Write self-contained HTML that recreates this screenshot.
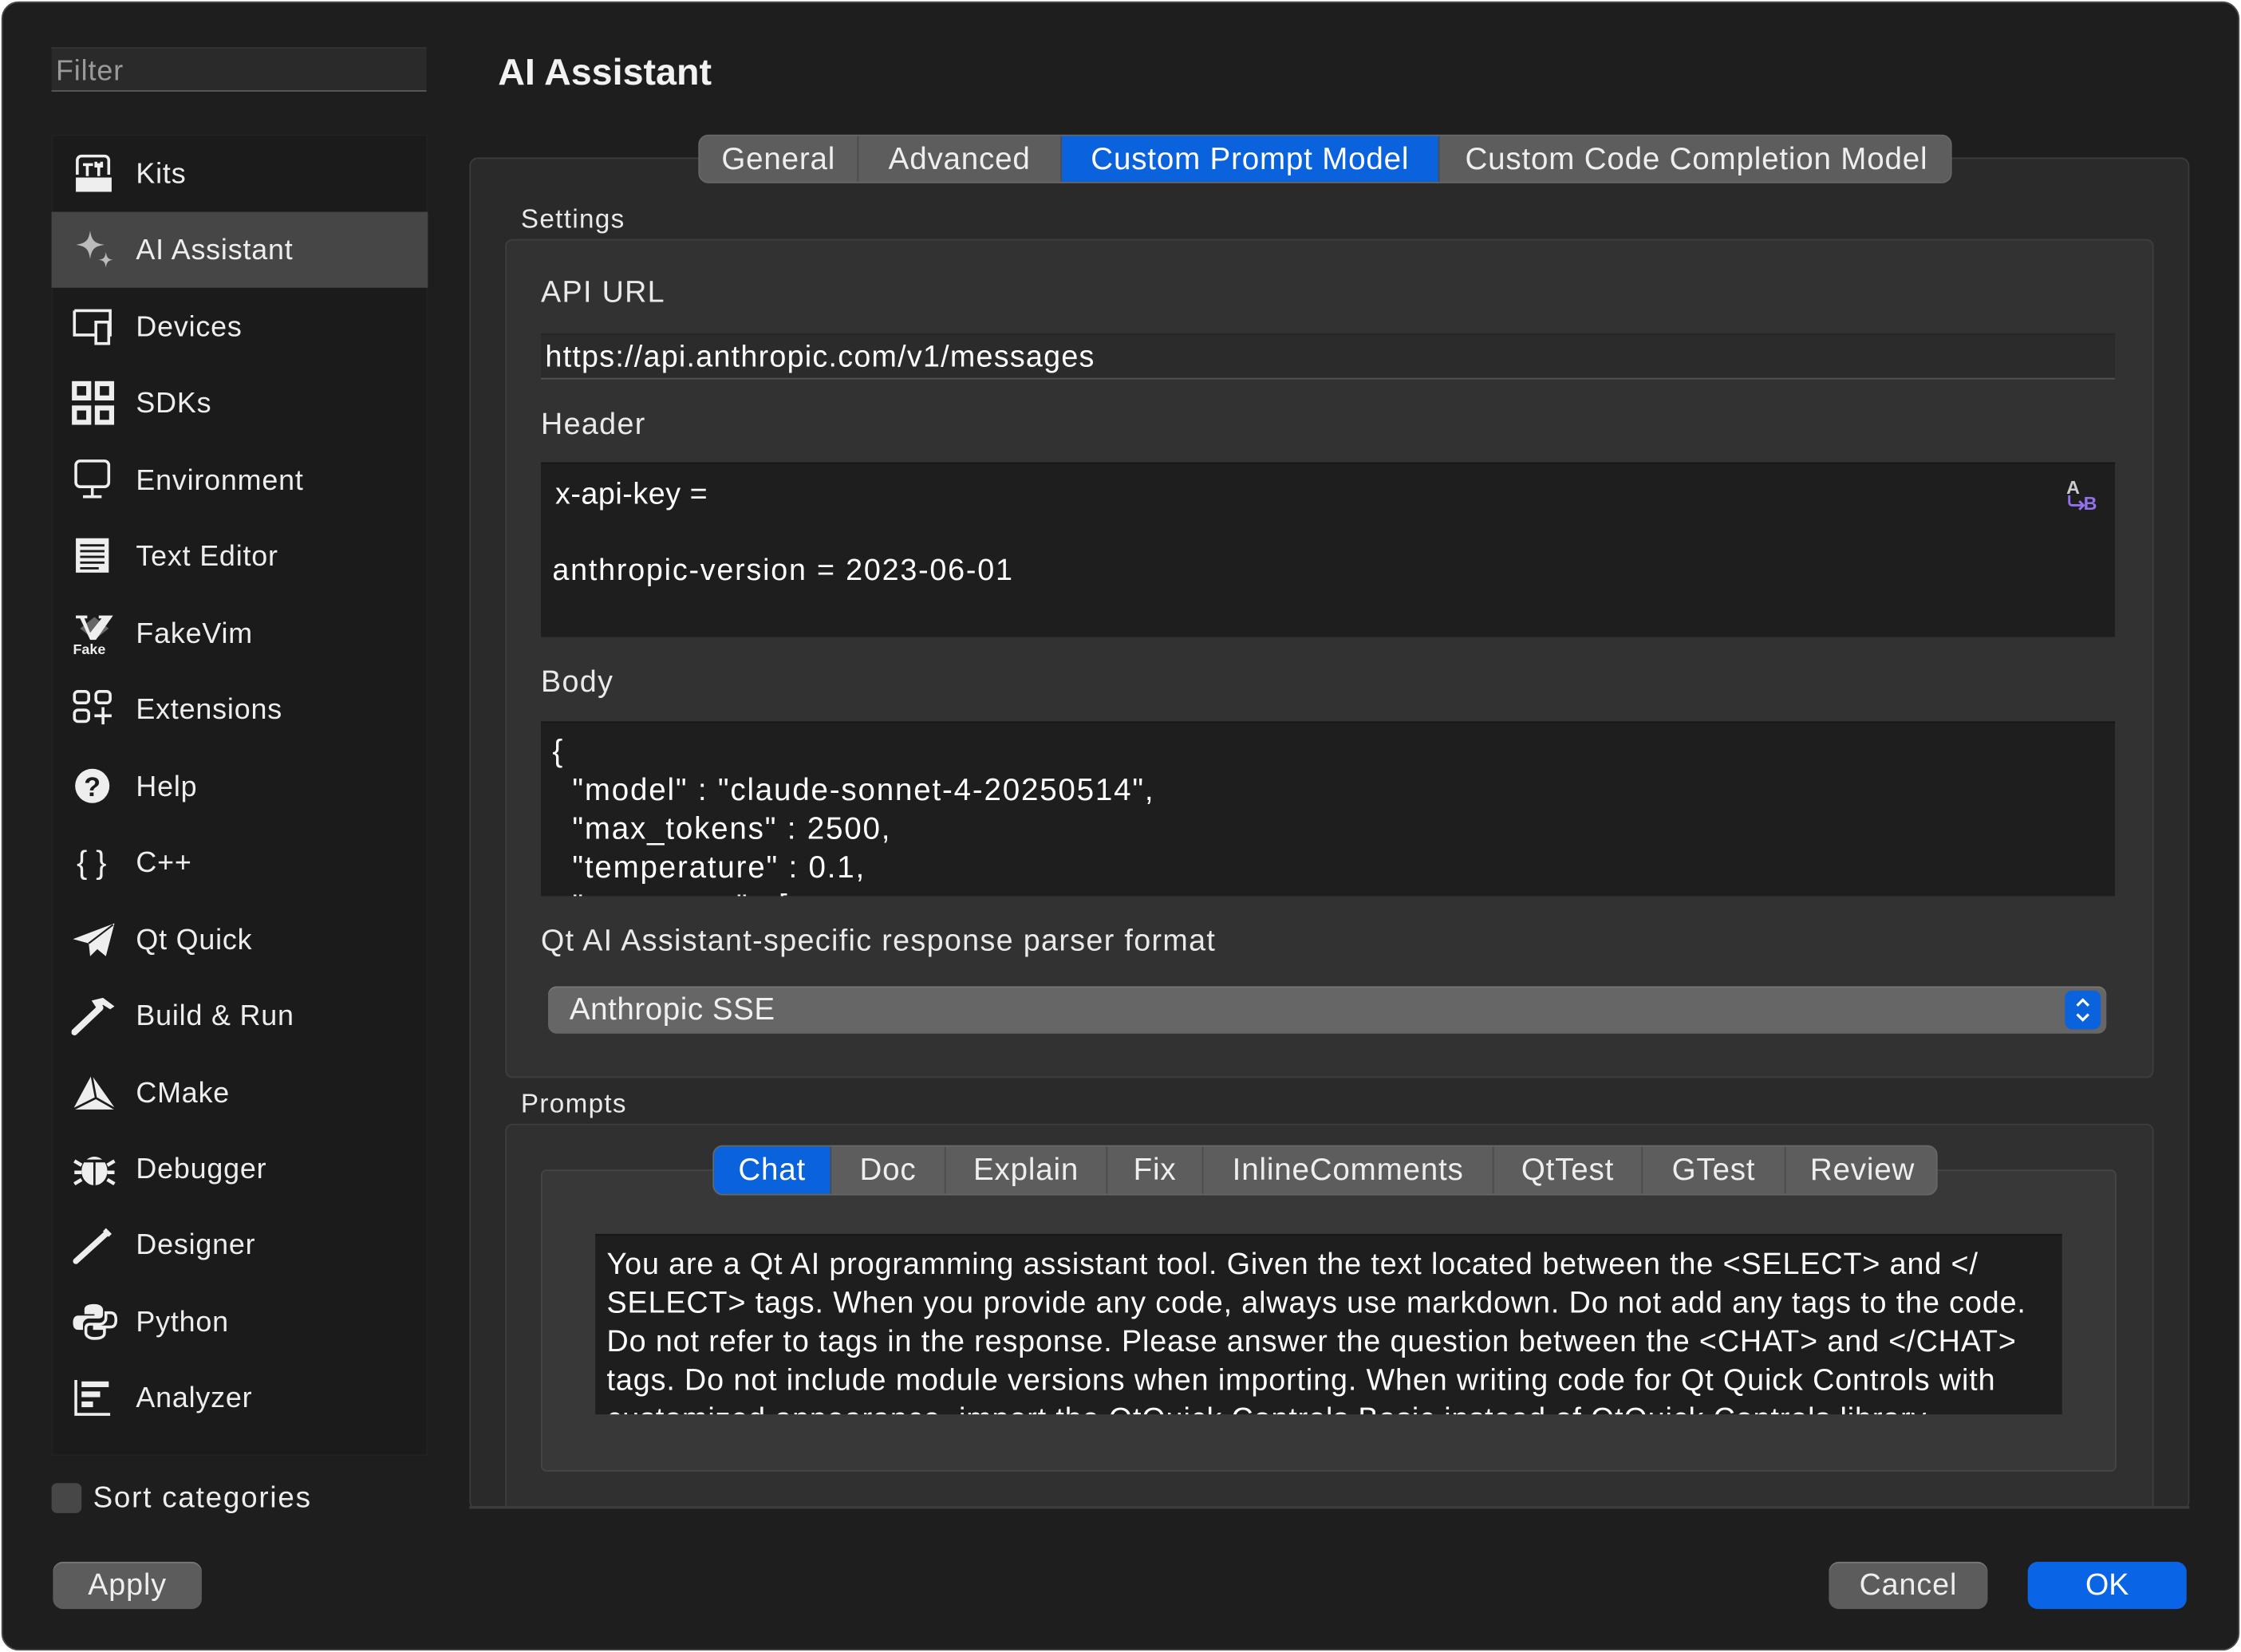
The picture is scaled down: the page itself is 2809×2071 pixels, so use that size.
<!DOCTYPE html>
<html><head><meta charset="utf-8"><style>
*{box-sizing:border-box;margin:0;padding:0}
html,body{width:2809px;height:2071px;overflow:hidden;background:#fff}
#s{position:absolute;left:0;top:0;width:1566px;height:1154px;transform:scale(1.7937,1.7946);transform-origin:0 0;font-family:"Liberation Sans",sans-serif;color:#eaeaea}
.a{position:absolute}
.win{left:1px;top:1px;width:1564px;height:1152px;background:#1e1e1e;border:1px solid #4a4a4a;border-radius:12px;overflow:hidden}
.t{position:absolute;white-space:nowrap;line-height:1}
.item{position:absolute;left:36px;width:262px;height:53px}
.item .t{left:59px;top:17px;font-size:20px;color:#eee;letter-spacing:0.45px}
.item svg{position:absolute;left:14px;top:11px}
.tab{position:absolute;top:0;height:100%;display:flex;align-items:center;justify-content:center;font-size:21.5px;color:#eee;border-right:1px solid #4c4c4c;letter-spacing:0.45px}
.ed{background:#1e1e1e;border-top:1px solid #151515}
.lb{letter-spacing:0.75px}
</style></head><body><div id="s">
<div class="a win"></div>
<div class="a" style="left:36px;top:33px;width:262px;height:31px;background:#2a2a2a;border-bottom:1px solid #5a5a5a;border-top:1px solid #333"></div>
<div class="t" style="left:39px;top:40px;font-size:20px;color:#9a9a9a;letter-spacing:0.5px">Filter</div>
<div class="t" style="left:348px;top:37px;font-size:26px;font-weight:bold;color:#f2f2f2">AI Assistant</div>
<div class="a" style="left:36px;top:94px;width:263px;height:923px;background:#1b1b1b;border:1px solid #222"></div>
<div class="a" style="left:36px;top:148px;width:263px;height:53px;background:#464646"></div>

<div class="item" style="top:95px"><svg width="30" height="30" viewBox="0 0 30 30"><path d="M4 16V6a3 3 0 0 1 3-3h16a3 3 0 0 1 3 3v10" stroke="#eee" stroke-width="2" fill="none"/><rect x="3" y="18" width="25" height="10" fill="#eee"/><path d="M8 9h7M11 9v8M19 8v9M17 7v3h4V7" stroke="#eee" stroke-width="2" fill="none"/></svg><div class="t">Kits</div></div>
<div class="item" style="top:148px"><svg width="34" height="34" viewBox="0 0 34 34"><path d="M13 2c1 7 3 9 10 10-7 1-9 3-10 10-1-7-3-9-10-10 7-1 9-3 10-10z" fill="#bbb"/><path d="M24 17c.6 4 1.5 5 5 5.5-3.5.5-4.4 1.5-5 5.5-.6-4-1.5-5-5-5.5 3.5-.5 4.4-1.5 5-5.5z" fill="#bbb"/></svg><div class="t">AI Assistant</div></div>
<div class="item" style="top:202px"><svg width="30" height="30" viewBox="0 0 30 30"><path d="M2 4h25v17h-5M17 21H2V4" stroke="#eee" stroke-width="2" fill="none"/><rect x="17" y="12" width="9" height="15" stroke="#eee" stroke-width="2" fill="#1b1b1b"/></svg><div class="t">Devices</div></div>
<div class="item" style="top:255px"><svg width="30" height="32" viewBox="0 0 30 32"><g stroke="#eee" stroke-width="3.5" fill="none"><rect x="2" y="2" width="10" height="10"/><rect x="18" y="2" width="10" height="10"/><rect x="2" y="19" width="10" height="10"/><rect x="18" y="19" width="10" height="10"/></g></svg><div class="t">SDKs</div></div>
<div class="item" style="top:309px"><svg width="30" height="30" viewBox="0 0 30 30"><rect x="3" y="2" width="23" height="18" rx="3" stroke="#eee" stroke-width="2" fill="none"/><path d="M14.5 20v7M8 27h13" stroke="#eee" stroke-width="2"/></svg><div class="t">Environment</div></div>
<div class="item" style="top:362px"><svg width="30" height="30" viewBox="0 0 30 30"><rect x="3" y="3" width="23" height="24" fill="#eee"/><path d="M6 8h17M6 12h17M6 16h17M6 20h17M6 24h13" stroke="#1b1b1b" stroke-width="1.6"/></svg><div class="t">Text Editor</div></div>
<div class="item" style="top:416px"><svg width="32" height="32" viewBox="0 0 32 32"><path d="M6 12l10 8 10-8-10-8z" fill="#666"/><path d="M3 3h8v2h-2l4 10 8-10h-2V3h10l-12 17h-4L6 5H3z" fill="#eee"/><text x="1" y="30" font-family="Liberation Sans" font-weight="bold" font-size="10" fill="#eee">Fake</text></svg><div class="t">FakeVim</div></div>
<div class="item" style="top:469px"><svg width="30" height="30" viewBox="0 0 30 30"><g stroke="#eee" stroke-width="2" fill="none"><rect x="2" y="3" width="10" height="8" rx="2.5"/><rect x="17" y="3" width="10" height="8" rx="2.5"/><rect x="2" y="16" width="10" height="8" rx="2.5"/><path d="M22 14v12M16 20h12"/></g></svg><div class="t">Extensions</div></div>
<div class="item" style="top:523px"><svg width="30" height="30" viewBox="0 0 30 30"><circle cx="14.5" cy="15" r="12" fill="#eee"/><text x="14.5" y="22" text-anchor="middle" font-family="Liberation Sans" font-weight="bold" font-size="19" fill="#1b1b1b">?</text></svg><div class="t">Help</div></div>
<div class="item" style="top:576px"><svg width="30" height="30" viewBox="0 0 30 30"><text x="14" y="23" text-anchor="middle" font-family="Liberation Sans" font-size="22" fill="#eee">{ }</text></svg><div class="t">C++</div></div>
<div class="item" style="top:630px"><svg width="32" height="30" viewBox="0 0 32 30"><path d="M1 15L30 4 24 27 18 22 13 27 12 18z" fill="#eee"/><path d="M12 18L29 5" stroke="#1b1b1b" stroke-width="1.2"/></svg><div class="t">Qt Quick</div></div>
<div class="item" style="top:683px"><svg width="32" height="30" viewBox="0 0 32 30"><path d="M2 27L20 10" stroke="#eee" stroke-width="4.5" stroke-linecap="round"/><path d="M14 5l8-2 8 6-3 2-5-3-4 3z" fill="#eee"/></svg><div class="t">Build &amp; Run</div></div>
<div class="item" style="top:737px"><svg width="32" height="30" viewBox="0 0 32 30"><path d="M14 3L1 27h30z" fill="#eee"/><path d="M14 3l3 16L1 27M17 19l14 8" stroke="#1b1b1b" stroke-width="1.5" fill="none"/></svg><div class="t">CMake</div></div>
<div class="item" style="top:790px"><svg width="32" height="30" viewBox="0 0 32 30"><ellipse cx="16" cy="17" rx="9" ry="10" fill="#eee"/><path d="M9 10h14" stroke="#1b1b1b" stroke-width="2"/><path d="M16 10v17" stroke="#1b1b1b" stroke-width="1.5"/><path d="M2 10l5 3M2 18h5M2 26l5-3M30 10l-5 3M30 18h-5M30 26l-5-3" stroke="#eee" stroke-width="2.5"/></svg><div class="t">Debugger</div></div>
<div class="item" style="top:843px"><svg width="30" height="30" viewBox="0 0 30 30"><path d="M3 27L24 8" stroke="#eee" stroke-width="4" stroke-linecap="round"/><path d="M23 5l4 4" stroke="#eee" stroke-width="3"/></svg><div class="t">Designer</div></div>
<div class="item" style="top:897px"><svg width="32" height="30" viewBox="0 0 32 30"><path d="M16 3c-6 0-7 2-7 4v3h7v1H5c-3 0-4 2-4 5s1 5 4 5h3v-4c0-2 2-4 4-4h7c2 0 3-1 3-3V7c0-2-2-4-6-4z" fill="#eee"/><path d="M16 27c6 0 7-2 7-4v-3h-7v-1h11c3 0 4-2 4-5s-1-5-4-5h-3v4c0 2-2 4-4 4h-7c-2 0-3 1-3 3v3c0 2 2 4 6 4z" fill="none" stroke="#eee" stroke-width="2"/></svg><div class="t">Python</div></div>
<div class="item" style="top:950px"><svg width="30" height="30" viewBox="0 0 30 30"><path d="M3 3v24h24" stroke="#eee" stroke-width="2" fill="none"/><rect x="7" y="4" width="19" height="4" fill="#eee"/><rect x="7" y="11" width="13" height="4" fill="#eee"/><rect x="7" y="18" width="8" height="4" fill="#eee"/></svg><div class="t">Analyzer</div></div>

<div class="a" style="left:36px;top:1036px;width:21px;height:21px;background:#474747;border-radius:4px"></div>
<div class="t" style="left:65px;top:1037px;font-size:20.5px;color:#eee;letter-spacing:1px">Sort categories</div>
<div class="a" style="left:37px;top:1091px;width:104px;height:33px;background:#5c5c5c;border-radius:7px;box-shadow:0 1px 0 #777 inset"></div>
<div class="t" style="left:37px;top:1097px;width:104px;text-align:center;font-size:21px;color:#eee;letter-spacing:0.5px">Apply</div>

<div class="a" style="left:328px;top:110px;width:1202px;height:945px;background:#2a2a2a;border:1px solid #3b3b3b;border-radius:6px"></div>
<div class="a" style="left:488px;top:94px;width:876px;height:34px;background:#5d5d5d;border-radius:7px;border:1px solid #666;overflow:hidden">
<div class="tab" style="left:0;width:111px">General</div>
<div class="tab" style="left:111px;width:142px">Advanced</div>
<div class="tab" style="left:253px;width:264px;background:#0a62dc;color:#fff">Custom Prompt Model</div>
<div class="tab" style="left:517px;width:359px;border:none">Custom Code Completion Model</div>
</div>
<div class="t lb" style="left:364px;top:144px;font-size:18.5px">Settings</div>
<div class="a" style="left:353px;top:167px;width:1152px;height:586px;background:#323232;border:1px solid #3e3e3e;border-radius:5px"></div>
<div class="t lb" style="left:378px;top:194px;font-size:21px">API URL</div>
<div class="a" style="left:378px;top:233px;width:1100px;height:32px;background:#2b2b2b;border-top:1px solid #262626;border-bottom:1px solid #555"></div>
<div class="t" style="left:381px;top:239px;font-size:21px;color:#fff;letter-spacing:0.7px">https://api.anthropic.com/v1/messages</div>
<div class="t lb" style="left:378px;top:286px;font-size:21px">Header</div>
<div class="a ed" style="left:378px;top:323px;width:1100px;height:122px"></div>
<div class="t" style="left:388px;top:335px;font-size:21px;color:#fff;letter-spacing:0.3px">x-api-key =</div>
<div class="t" style="left:386px;top:388px;font-size:21px;color:#fff;letter-spacing:1px">anthropic-version = 2023-06-01</div>
<div class="t" style="left:1444px;top:334px;font-size:13px;color:#ccc;font-weight:bold">A</div>
<div class="t" style="left:1456px;top:345px;font-size:13px;color:#9370ee;font-weight:bold">B</div>
<svg class="a" style="left:1444px;top:346px" width="14" height="12" viewBox="0 0 14 12"><path d="M2 0v5a2 2 0 0 0 2 2h8M9 4l3 3-3 3" stroke="#9370ee" stroke-width="1.6" fill="none"/></svg>
<div class="t lb" style="left:378px;top:466px;font-size:21px">Body</div>
<div class="a ed" style="left:378px;top:504px;width:1100px;height:122px;overflow:hidden">
<div style="position:absolute;left:8px;top:7px;font-size:21.5px;line-height:27px;color:#fff;white-space:pre;letter-spacing:1px">{
  "model" : "claude-sonnet-4-20250514",
  "max_tokens" : 2500,
  "temperature" : 0.1,
  "messages" : [</div></div>
<div class="t lb" style="left:378px;top:647px;font-size:21px">Qt AI Assistant-specific response parser format</div>
<div class="a" style="left:383px;top:689px;width:1089px;height:33px;background:#666;border-radius:6px;box-shadow:0 1px 0 #777 inset"></div>
<div class="t" style="left:398px;top:695px;font-size:21.5px;color:#f0f0f0;letter-spacing:0.3px">Anthropic SSE</div>
<div class="a" style="left:1443px;top:692px;width:25px;height:27px;background:#0a62dc;border-radius:5px"></div>
<svg class="a" style="left:1443px;top:692px" width="25" height="27" viewBox="0 0 25 27"><path d="M8.5 10.5l4-4 4 4M8.5 16.5l4 4 4-4" stroke="#fff" stroke-width="1.8" fill="none"/></svg>
<div class="t lb" style="left:364px;top:762px;font-size:18.5px">Prompts</div>
<div class="a" style="left:353px;top:785px;width:1152px;height:275px;background:#303030;border:1px solid #3e3e3e;border-radius:5px"></div>
<div class="a" style="left:378px;top:817px;width:1101px;height:211px;background:#383838;border:1px solid #454545;border-radius:4px"></div>
<div class="a" style="left:498px;top:800px;width:856px;height:35px;background:#5d5d5d;border-radius:7px;border:1px solid #666;overflow:hidden">
<div class="tab" style="left:0;width:82px;background:#0a62dc;color:#fff">Chat</div>
<div class="tab" style="left:82px;width:80px">Doc</div>
<div class="tab" style="left:162px;width:113px">Explain</div>
<div class="tab" style="left:275px;width:67px">Fix</div>
<div class="tab" style="left:342px;width:203px">InlineComments</div>
<div class="tab" style="left:545px;width:104px">QtTest</div>
<div class="tab" style="left:649px;width:100px">GTest</div>
<div class="tab" style="left:749px;width:107px;border:none">Review</div>
</div>
<div class="a ed" style="left:416px;top:862px;width:1025px;height:126px;overflow:hidden">
<div style="position:absolute;left:8px;top:7px;width:1020px;font-size:21px;line-height:27px;color:#fff;letter-spacing:0.5px;white-space:nowrap">You are a Qt AI programming assistant tool. Given the text located between the &lt;SELECT&gt; and &lt;/<br>SELECT&gt; tags. When you provide any code, always use markdown. Do not add any tags to the code.<br>Do not refer to tags in the response. Please answer the question between the &lt;CHAT&gt; and &lt;/CHAT&gt;<br>tags. Do not include module versions when importing. When writing code for Qt Quick Controls with<br>customized appearance, import the QtQuick.Controls.Basic instead of QtQuick.Controls library.</div></div>
<div class="a" style="left:328px;top:1054px;width:1202px;height:20px;background:#1e1e1e"></div>
<div class="a" style="left:328px;top:1052px;width:1202px;height:2px;background:#3b3b3b"></div>
<div class="a" style="left:1278px;top:1091px;width:111px;height:33px;background:#5c5c5c;border-radius:7px;box-shadow:0 1px 0 #777 inset"></div>
<div class="t" style="left:1278px;top:1097px;width:111px;text-align:center;font-size:21px;color:#eee;letter-spacing:0.5px">Cancel</div>
<div class="a" style="left:1417px;top:1091px;width:111px;height:33px;background:#0a64e6;border-radius:7px"></div>
<div class="t" style="left:1417px;top:1097px;width:111px;text-align:center;font-size:21px;color:#fff">OK</div>
</div></body></html>
